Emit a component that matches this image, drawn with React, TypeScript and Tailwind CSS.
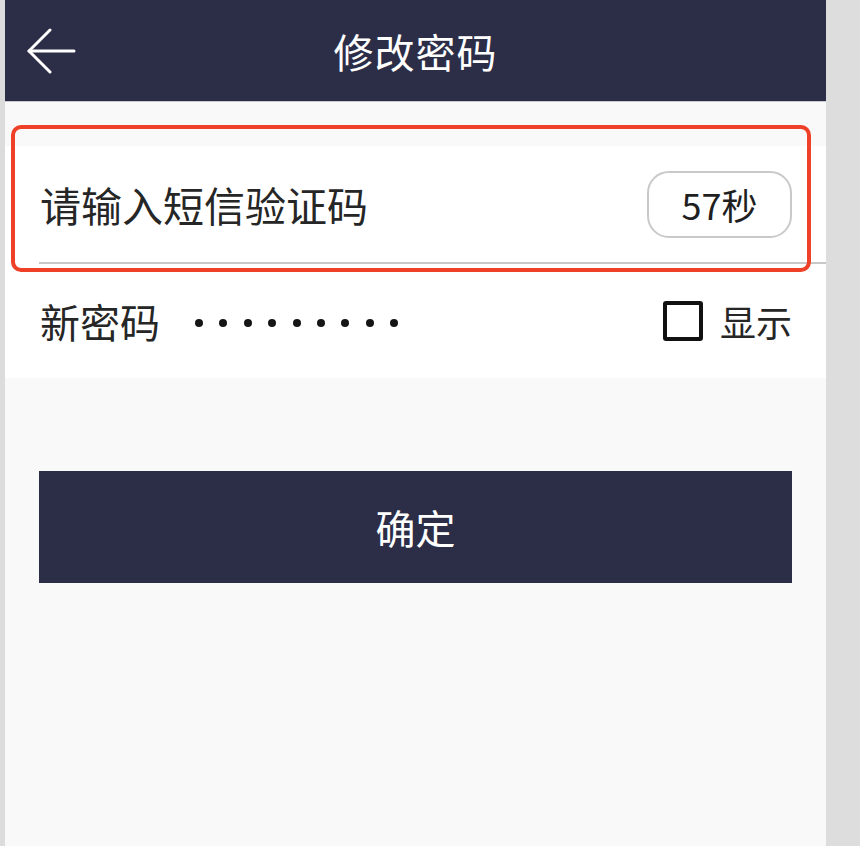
export default function App() {
  const dots = Array.from({ length: 9 });

  return (
    <div
      className="relative flex h-[846px] w-[860px] overflow-hidden bg-[#dddddd]"
      style={{ fontFamily: '"Noto Sans CJK SC", "Noto Sans", sans-serif' }}
    >
      <div className="w-[5px] shrink-0 bg-[#dcdcdc]" />

      <main className="flex w-[821px] shrink-0 flex-col bg-[#f9f9fa]">
        {/* header */}
        <header className="grid h-[102px] grid-cols-[1fr_auto_1fr] items-center border-b border-[#c9c9cc] bg-[#2c2e48]">
          <div className="flex items-center pl-[21px]">
            <svg width="50" height="46" viewBox="0 0 50 46" fill="none" stroke="#ffffff" strokeWidth="3" strokeLinecap="round" strokeLinejoin="round">
              <path d="M48 23 H3" />
              <path d="M24 2 L3 23 L24 44" />
            </svg>
          </div>
          <h1 className="text-[40px] leading-none tracking-[1px] text-white">修改密码</h1>
          <div />
        </header>

        <div className="h-[44px]" />

        {/* sms code row */}
        <div className="flex h-[116px] items-center justify-between bg-white pl-[35px] pr-[34px]">
          <span className="text-[41px] leading-none text-[#262626]">请输入短信验证码</span>
          <button className="flex h-[67px] w-[145px] items-center justify-center rounded-[22px] border-2 border-[#c9c9c9] bg-white text-[36px] leading-none text-[#1f1f1f]">
            57秒
          </button>
        </div>
        <div className="bg-white pl-[34px]">
          <div className="h-[2px] bg-[#c8c8c8]" />
        </div>

        {/* new password row */}
        <div className="flex h-[114px] items-center bg-white pl-[35px] pr-[34px]">
          <span className="text-[40px] leading-none text-[#262626]">新密码</span>
          <div className="ml-[35px] flex items-center gap-[16.4px] pt-[3px]">
            {dots.map((_, i) => (
              <span key={i} className="h-[8px] w-[8px] rounded-full bg-[#151515]" />
            ))}
          </div>
          <div className="ml-auto flex items-center gap-[17px]">
            <span className="h-[40px] w-[40px] rounded-[3px] border-4 border-[#111111] bg-white" />
            <span className="text-[36px] leading-none text-[#262626]">显示</span>
          </div>
        </div>

        <div className="px-[34px] pt-[93px]">
          <button className="flex h-[112px] w-full items-center justify-center bg-[#2c2e48] text-[40px] leading-none text-white">
            确定
          </button>
        </div>
      </main>

      <div className="flex-1 bg-[#dddddd]" />

      {/* annotation */}
      <div className="pointer-events-none absolute left-[11px] top-[125px] h-[147px] w-[800px] rounded-[10px] border-4 border-[#ee4128]" />
    </div>
  );
}
